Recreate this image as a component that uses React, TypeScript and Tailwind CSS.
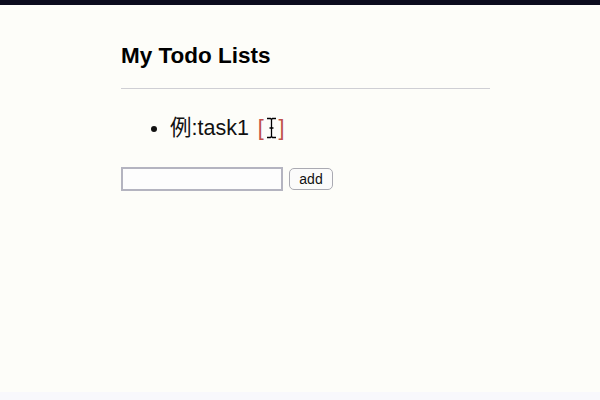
import React from "react";

export default function App() {
  return (
    <div className="w-[600px] h-[400px] bg-[#fdfdf9] flex flex-col overflow-hidden relative" style={{ fontFamily: '"Liberation Sans", "Noto Sans CJK JP", sans-serif' }}>
      <div className="h-[5px] bg-[#0c0c1e] shrink-0" />
      <div className="ml-[121px] w-[369px] flex flex-col">
        <h1 className="mt-[38px] text-[22.5px] leading-[26px] font-bold text-black">My Todo Lists</h1>
        <div className="mt-[19px] h-px bg-[#cfcfd4]" />
        <ul className="mt-[27px] pl-[49px] list-disc text-[21.5px] leading-[24px] text-[#111]">
          <li className="pl-0">
            例:task1{" "}
            <span className="text-[#c0504a] relative ml-[3px]">
              [<span className="opacity-0 px-[2px]">x</span>]
              <svg className="absolute left-[8px] top-[1px]" width="11" height="22" viewBox="0 0 11 22">
                <path d="M1 1.5 H4.5 L5.5 2.5 L6.5 1.5 H10 M5.5 2.5 V19.5 M1 20.5 H4.5 L5.5 19.5 L6.5 20.5 H10 M3 11 H8" stroke="#fff" strokeWidth="3" fill="none" />
                <path d="M1 1.5 H4.5 L5.5 2.5 L6.5 1.5 H10 M5.5 2.5 V19.5 M1 20.5 H4.5 L5.5 19.5 L6.5 20.5 H10 M3.5 11 H7.5" stroke="#000" strokeWidth="1.3" fill="none" />
              </svg>
            </span>
          </li>
        </ul>
        <div className="mt-[27px] flex items-center gap-[6px]">
          <input className="w-[162px] h-[24px] border-2 border-[#b4b4c0] bg-[#fdfdfd] outline-none" />
          <button className="h-[22px] w-[44px] border border-[#aaaab2] rounded-[5px] bg-[#fbfbfb] text-[14px] leading-[18px] text-[#111]">add</button>
        </div>
      </div>
      <div className="absolute left-0 bottom-0 w-full h-[8px] bg-[#f8f8fc]" />
    </div>
  );
}
